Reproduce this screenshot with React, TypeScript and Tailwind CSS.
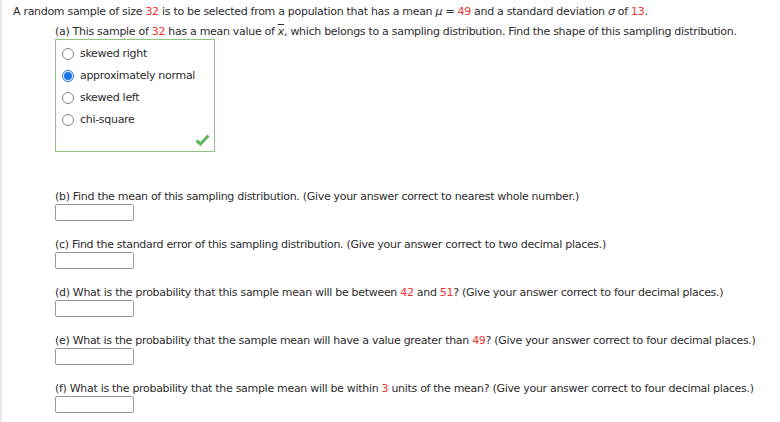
import React from "react";

const Red = ({ children }: { children: React.ReactNode }) => (
  <span className="text-[#ee3333]">{children}</span>
);

function Radio({ checked }: { checked?: boolean }) {
  return checked ? (
    <span className="inline-flex w-[12px] h-[12px] rounded-full border border-[#1a73e8] items-center justify-center bg-white">
      <span className="w-[8px] h-[8px] rounded-full bg-[#1a73e8]" />
    </span>
  ) : (
    <span className="inline-block w-[12px] h-[12px] rounded-full border border-[#858585] bg-white" />
  );
}

function Input() {
  return <div className="w-[79px] h-[17px] border border-[#999] rounded-[2px] bg-white" />;
}

function Q({ children, first }: { children: React.ReactNode; first?: boolean }) {
  return (
    <div className={first ? "mt-[37px]" : "mt-[16px]"}>
      <div className="h-[15px] leading-[15px] whitespace-nowrap">{children}</div>
      <Input />
    </div>
  );
}

export default function App() {
  const opts = ["skewed right", "approximately normal", "skewed left", "chi-square"];
  return (
    <div
      className="w-[780px] h-[422px] bg-white border-l-2 border-[#e8e8e8] text-[#2d2d2d] text-[11px] tracking-[-0.3px] overflow-hidden"
      style={{ fontFamily: '"DejaVu Sans", Verdana, sans-serif' }}
    >
      <div className="pl-[11px] pt-[4px] h-[19px] leading-[15px] whitespace-nowrap">
        A random sample of size <Red>32</Red> is to be selected from a population that has a mean{" "}
        <i>μ</i> = <Red>49</Red> and a standard deviation <i>σ</i> of <Red>13</Red>.
      </div>
      <div className="pl-[53px]">
        <div className="mt-[5px] h-[15px] leading-[15px] whitespace-nowrap">
          (a) This sample of <Red>32</Red> has a mean value of{" "}
          <i className="overline">x</i>, which belongs to a sampling distribution. Find the shape of
          this sampling distribution.
        </div>
        <div className="relative w-[160px] h-[113px] border border-[#8cc97c] pt-[3px] pl-[6px]">
          {opts.map((o, i) => (
            <div key={o} className="flex items-center h-[22px]">
              <Radio checked={i === 1} />
              <span className="ml-[6px]">{o}</span>
            </div>
          ))}
          <svg
            className="absolute right-[4px] bottom-[5px]"
            width="15"
            height="12"
            viewBox="0 0 15 12"
          >
            <path d="M1.5 6.5 L5.5 10 L13.5 1.5" fill="none" stroke="#5cb85c" strokeWidth="3" />
          </svg>
        </div>
        <Q first>
          (b) Find the mean of this sampling distribution. (Give your answer correct to nearest whole
          number.)
        </Q>
        <Q>
          (c) Find the standard error of this sampling distribution. (Give your answer correct to two
          decimal places.)
        </Q>
        <Q>
          (d) What is the probability that this sample mean will be between <Red>42</Red> and{" "}
          <Red>51</Red>? (Give your answer correct to four decimal places.)
        </Q>
        <Q>
          (e) What is the probability that the sample mean will have a value greater than{" "}
          <Red>49</Red>? (Give your answer correct to four decimal places.)
        </Q>
        <Q>
          (f) What is the probability that the sample mean will be within <Red>3</Red> units of the
          mean? (Give your answer correct to four decimal places.)
        </Q>
      </div>
    </div>
  );
}
